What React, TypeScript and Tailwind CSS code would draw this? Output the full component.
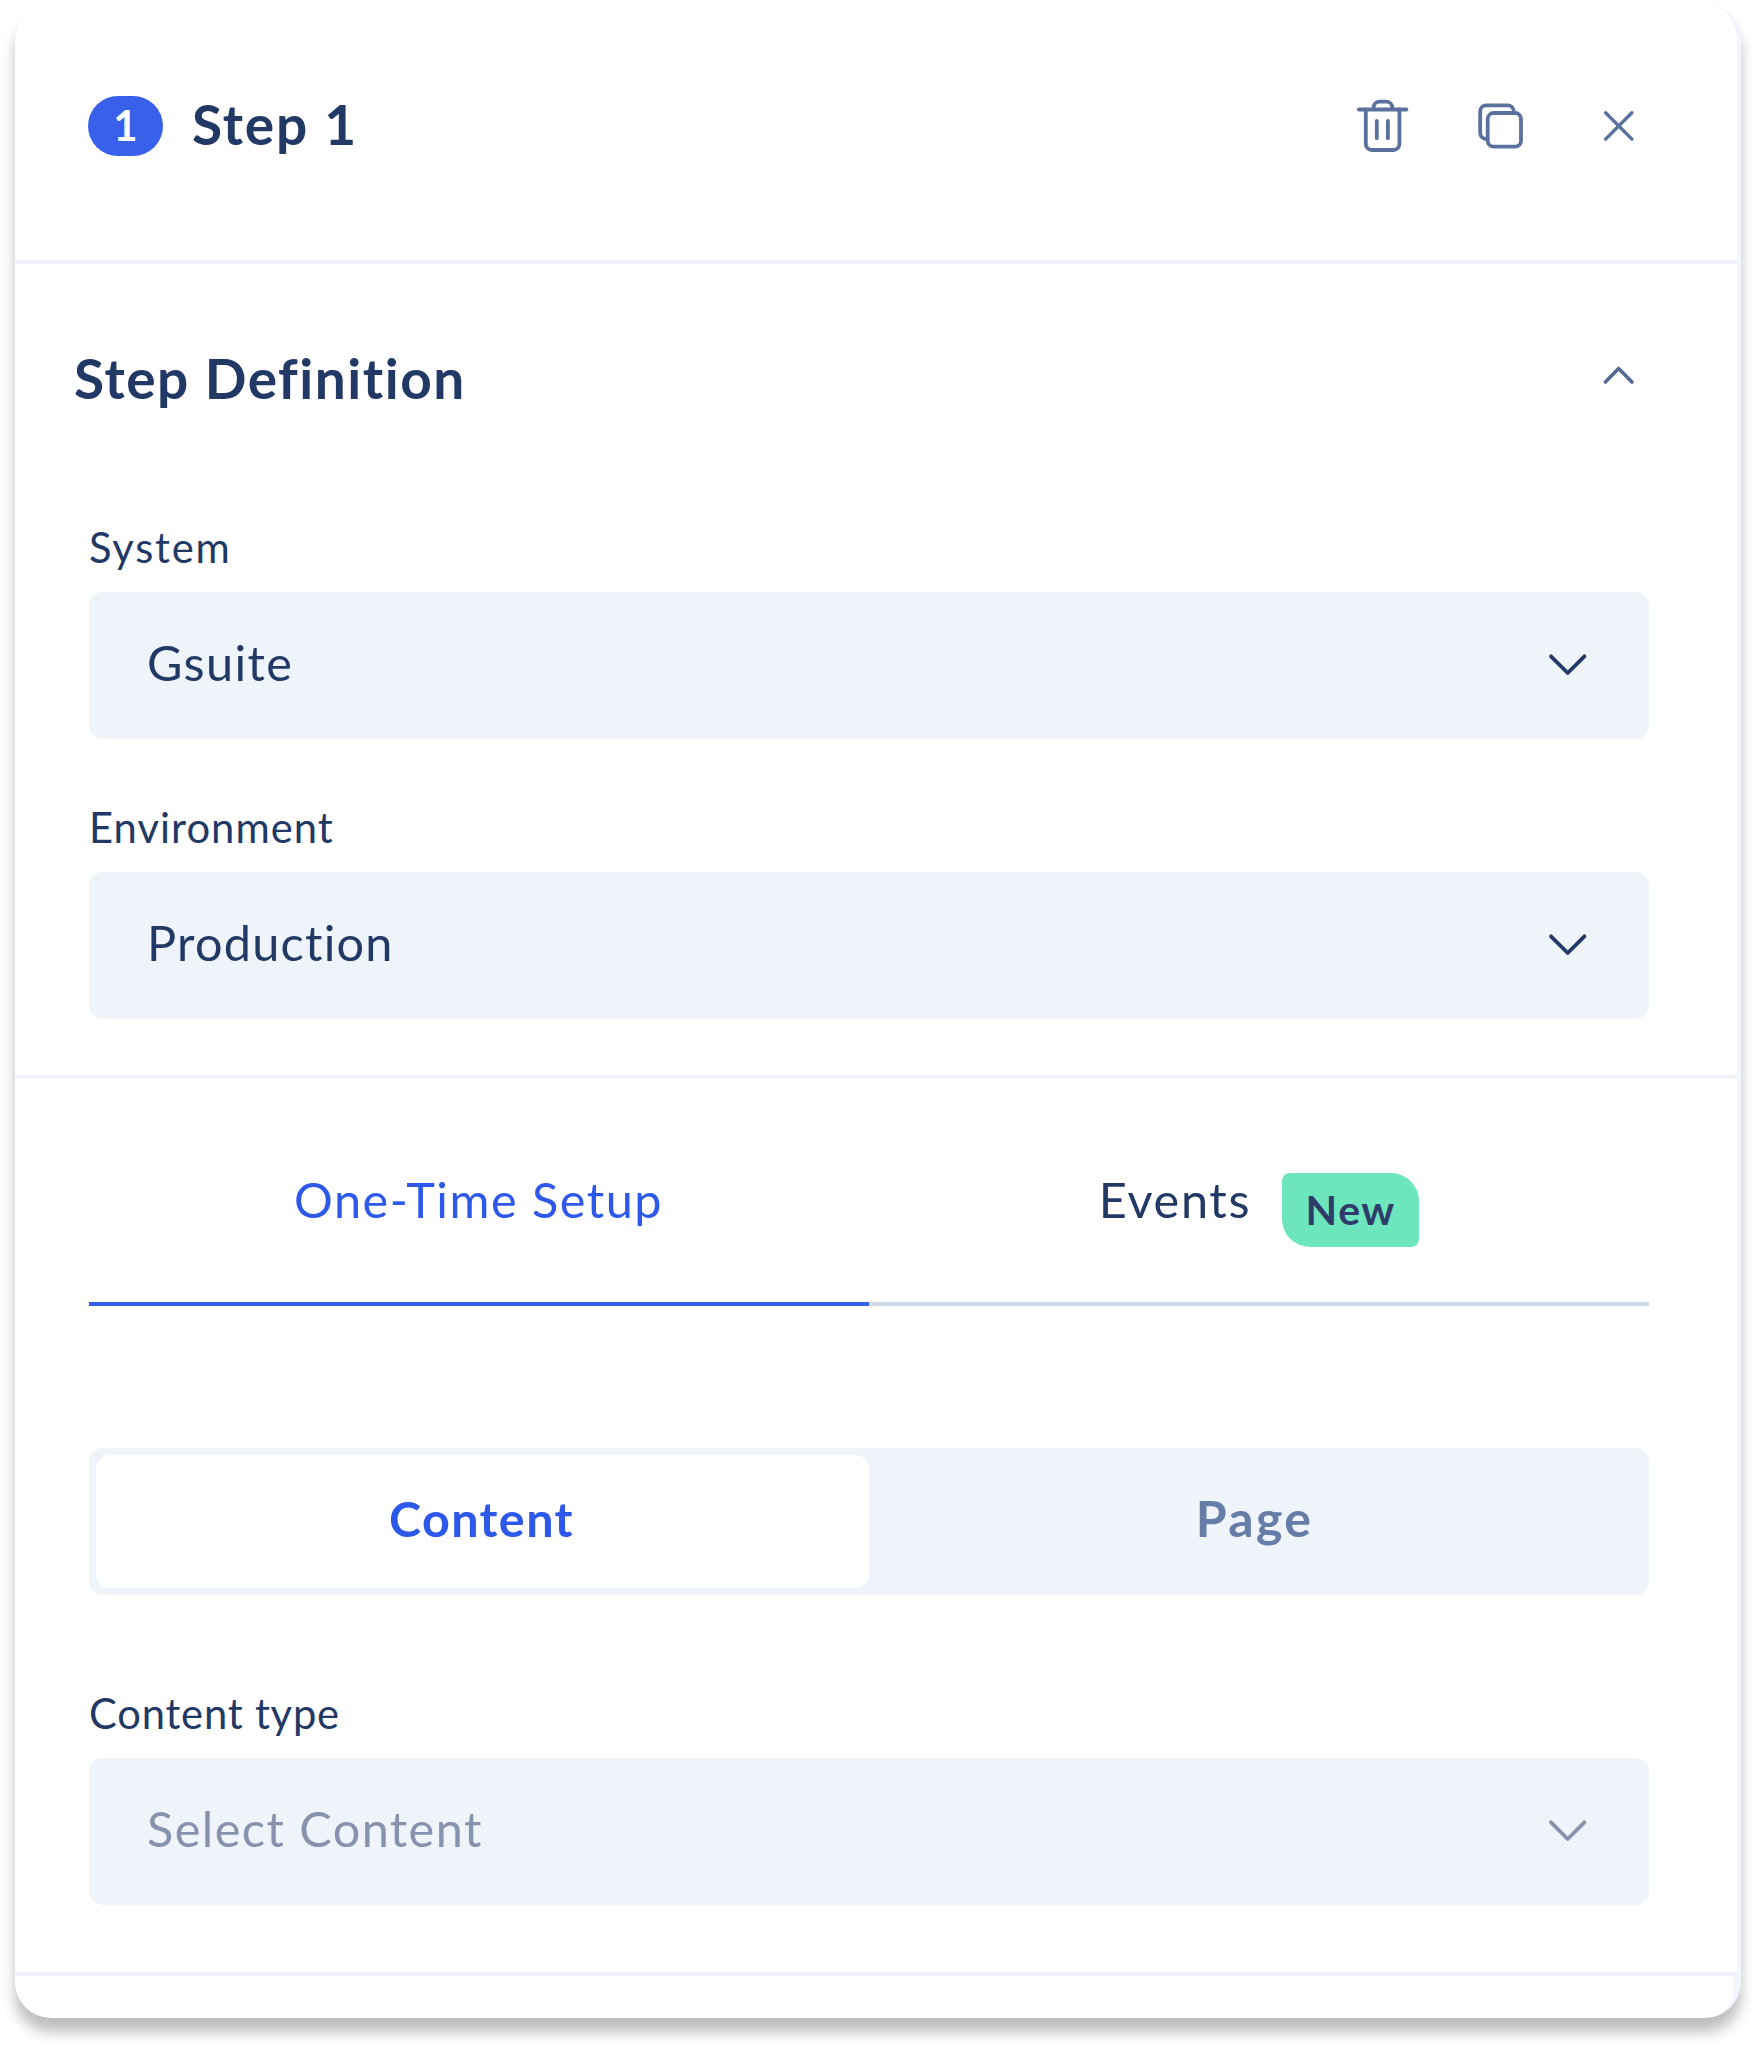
import { useState } from "react";

type ChevronProps = {
  className?: string;
};

function ChevronDown({ className }: ChevronProps) {
  return (
    <svg viewBox="0 0 40 24" fill="none" stroke="currentColor" strokeWidth="3.8" strokeLinecap="round" strokeLinejoin="round" className={`w-10 h-6 shrink-0 ${className ?? ""}`}>
      <path d="M3 3.3 L19.7 20 L36.4 3.3" />
    </svg>
  );
}

function ChevronUp() {
  return (
    <svg viewBox="0 0 60 30" fill="none" stroke="currentColor" strokeWidth="3.6" strokeLinecap="round" strokeLinejoin="round" className="w-[60px] h-[30px] text-[#566a92]">
      <path d="M17.4 22 L30.6 8.5 L44 22" />
    </svg>
  );
}

function TrashIcon() {
  return (
    <svg viewBox="0 0 60 60" fill="none" stroke="currentColor" strokeWidth="3.8" strokeLinecap="round" strokeLinejoin="round" className="w-[60px] h-[60px]">
      <path d="M6.8 13.5 H54.4" />
      <path d="M13.8 13.5 V48 a6 6 0 0 0 6 6 H41.4 a6 6 0 0 0 6 -6 V13.5" />
      <path d="M21.6 13 V11.7 a6 6 0 0 1 6 -6 H34.2 a6 6 0 0 1 6 6 V13" />
      <path d="M24.8 24.9 V42.2" />
      <path d="M35.9 24.9 V42.2" />
    </svg>
  );
}

function CopyIcon() {
  return (
    <svg viewBox="0 0 60 60" fill="none" stroke="currentColor" strokeWidth="3.8" strokeLinecap="round" strokeLinejoin="round" className="w-[60px] h-[60px]">
      <rect x="16.7" y="17" width="33.3" height="33.7" rx="6" />
      <path d="M42.7 16 V15.3 a6 6 0 0 0 -6 -6 H15.2 a6 6 0 0 0 -6 6 V37 a6 6 0 0 0 6 6" />
    </svg>
  );
}

function CloseIcon() {
  return (
    <svg viewBox="0 0 60 60" fill="none" stroke="currentColor" strokeWidth="3.4" strokeLinecap="round" className="w-[60px] h-[60px]">
      <path d="M16.6 16.8 L42.9 43.1" />
      <path d="M42.9 16.8 L16.6 43.1" />
    </svg>
  );
}

type FieldProps = {
  label: string;
  labelClass?: string;
  value: string;
  valueClass?: string;
  placeholder?: boolean;
};

function SelectField({ label, labelClass, value, valueClass, placeholder }: FieldProps) {
  return (
    <div className="flex flex-col">
      <label className={`h-[50px] leading-[52px] text-[41.7px] ${labelClass ?? ""}`}>{label}</label>
      <button
        type="button"
        className={`mt-[21px] h-[147px] w-full pl-[58px] pr-[61px] rounded-[14px] bg-[#eff3fa] flex items-center justify-between ${placeholder ? "text-[#8793ae]" : "text-[#223965]"}`}
      >
        <span className={`pb-[8px] text-[48.6px] leading-[56px] ${valueClass ?? ""}`}>{value}</span>
        <ChevronDown className="-mt-[2px]" />
      </button>
    </div>
  );
}

export default function App() {
  const [mode, setMode] = useState("Content");

  return (
    <div className="h-[2048px] w-[1756px] overflow-hidden bg-white pl-[15px] pt-[4px] font-['Lato',sans-serif] text-[#223965]">
      <div className="w-[1726px] h-[2014px] overflow-hidden rounded-[36px] border-r-[4px] border-[#f1f5fd] bg-white shadow-[0_14px_14px_rgba(0,0,0,0.26)]">
        <header className="h-[260px] pt-[92px] pl-[73px] pr-[88px] border-b-[4px] border-[#f1f4fb]">
          <div className="h-[60px] flex items-center">
            <div className="w-[75px] h-[60px] rounded-full bg-[#3860eb] text-white text-[42px] leading-[58px] font-bold text-center">1</div>
            <h1 className="ml-[29px] pb-[4px] text-[55px] leading-[64px] font-bold tracking-[1.8px]">Step 1</h1>
            <div className="ml-auto flex items-center gap-[58.5px] text-[#5a719d]">
              <TrashIcon />
              <CopyIcon />
              <CloseIcon />
            </div>
          </div>
        </header>

        <section className="h-[815px] pl-[74px] pr-[88px] border-b-[4px] border-[#f1f4fb]">
          <div className="pt-[81px] -ml-[15px] pr-px flex items-start justify-between">
            <h2 className="pt-px text-[55px] leading-[64px] font-bold tracking-[1.5px]">Step Definition</h2>
            <button type="button" className="mt-[15px]">
              <ChevronUp />
            </button>
          </div>
          <div className="mt-[111px] flex flex-col gap-[62px]">
            <SelectField label="System" labelClass="tracking-[1.8px]" value="Gsuite" valueClass="tracking-[1.4px]" />
            <SelectField label="Environment" labelClass="tracking-[1.05px]" value="Production" valueClass="tracking-[1.25px]" />
          </div>
        </section>

        <section className="h-[897px] pl-[74px] pr-[88px] border-b-[4px] border-[#f1f4fb]">
          <div className="h-[227px] pt-[92px] grid grid-cols-2 text-[48.6px] leading-[56px]">
            <div className="pr-px text-center text-[#2d58ea] tracking-[1.5px] border-b-[4px] border-[#3460ea]">One-Time Setup</div>
            <div className="flex items-start justify-center border-b-[4px] border-[#d1d9e6]">
              <span className="tracking-[1.7px]">Events</span>
              <span className="mt-[2px] ml-[31px] w-[137px] h-[74px] rounded-tl-[8px] rounded-tr-[28px] rounded-br-[8px] rounded-bl-[28px] bg-[#6de5bd] text-[#2d3c68] text-[41px] leading-[73px] font-bold tracking-[1.6px] text-center">
                New
              </span>
            </div>
          </div>

          <div className="mt-[142px] mb-[92px] h-[147px] p-[7px] rounded-[14px] bg-[#eff3fa] grid grid-cols-2">
            {["Content", "Page"].map(item => (
              <button
                key={item}
                type="button"
                onClick={() => setMode(item)}
                className={`pb-[6px] pr-[2px] rounded-[14px] font-bold ${item === mode ? "text-[48.5px] bg-white text-[#2d58ea] tracking-[1.4px]" : "text-[50px] text-[#667da7] tracking-[2.3px]"}`}
              >
                {item}
              </button>
            ))}
          </div>

          <SelectField label="Content type" labelClass="tracking-[0.8px]" value="Select Content" valueClass="tracking-[1.45px]" placeholder />
        </section>

        <div className="h-[42px] border-r-[4px] border-[#f1f4fb]" />
      </div>
    </div>
  );
}
